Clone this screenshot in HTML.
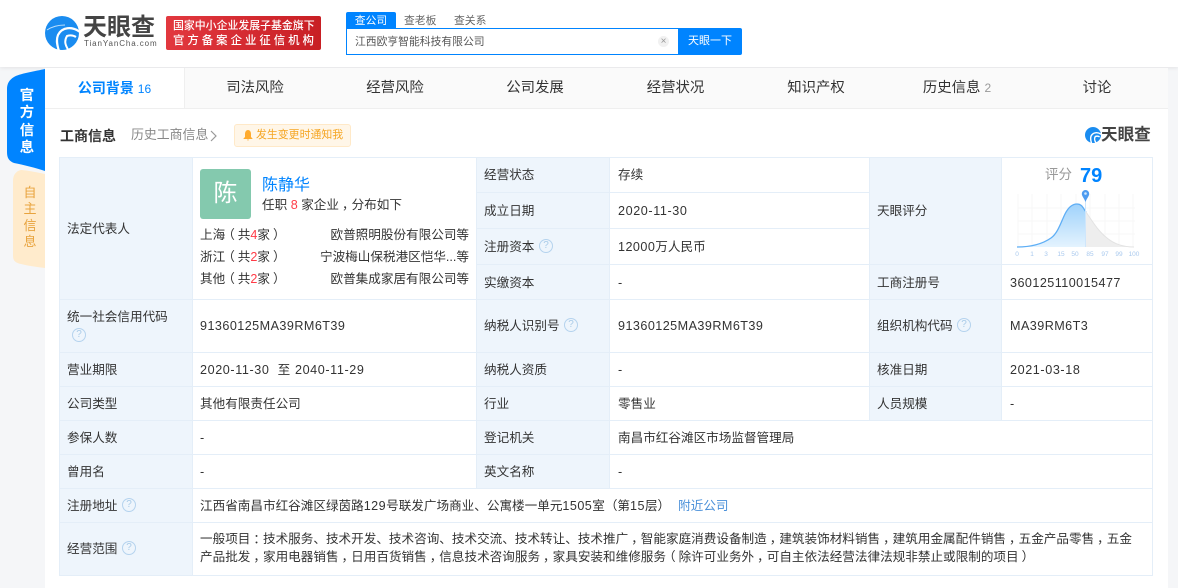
<!DOCTYPE html>
<html><head><meta charset="utf-8">
<style>
html,body{margin:0;padding:0;width:1178px;height:588px;overflow:hidden;background:#f5f6f8;}
body{position:relative;font-family:"Liberation Sans","Noto Sans CJK SC",sans-serif;font-size:12.6px;color:#333;}
.a{position:absolute;white-space:nowrap;line-height:22px;}
.l{position:absolute;background:#e4eef8;}
.b{position:absolute;background:#eef5fc;}
.q{position:absolute;width:12px;height:12px;border:1px solid #b5d3ee;border-radius:50%;color:#a9cbe8;font-size:10px;line-height:12px;text-align:center;}
.r{color:#ff3b47;}
.n{letter-spacing:.45px;}
.c{position:relative;left:3px;}
.o{position:relative;left:-3px;}
.t{position:absolute;top:70px;height:38px;line-height:37px;font-size:14.4px;color:#333;text-align:center;}
.t small{font-size:12px;color:#999;}
</style></head><body>
<div style="position:absolute;left:0;top:0;width:1178px;height:67px;background:#fff;box-shadow:0 1px 4px rgba(0,0,0,.08)"></div>
<!-- logo -->
<svg style="position:absolute;left:45px;top:16px" width="34" height="34" viewBox="0 0 34 34">
<circle cx="17" cy="17" r="17" fill="#1a8cf0"/>
<path d="M35 16C27 10 17 11 13 19C11 24 12 29 14 35" fill="none" stroke="#fff" stroke-width="2.2"/>
<path d="M2 14C8 10 14 9 20 9" fill="none" stroke="#bfe0fb" stroke-width="1"/>
<path d="M24 35C20 29 19 25 22 20C25 19 28 19 31 21" fill="none" stroke="#fff" stroke-width="2"/>
<path d="M34 21L30 34H24L34 26Z" fill="#fff"/>
</svg>
<div class="a" style="left:83px;top:14px;font-size:24px;line-height:27px;color:#444;font-weight:700;">天眼查</div>
<div class="a" style="left:84px;top:39px;font-size:8px;line-height:10px;color:#555;letter-spacing:.9px">TianYanCha.com</div>
<div style="position:absolute;left:166px;top:16px;width:155px;height:34px;border-radius:2px;background:linear-gradient(90deg,#e2383f,#c81f24)"></div>
<div class="a" style="left:173px;top:18px;font-size:10.9px;line-height:16px;color:#fff;font-weight:500">国家中小企业发展子基金旗下</div>
<div class="a" style="left:173px;top:33px;font-size:11.4px;line-height:16px;color:#fff;letter-spacing:3px;font-weight:500">官方备案企业征信机构</div>
<!-- search -->
<div style="position:absolute;left:346px;top:12px;width:50px;height:17px;background:#0084ff;border-radius:2px 2px 0 0;color:#fff;font-size:10.8px;line-height:18px;text-align:center">查公司</div>
<div class="a" style="left:404px;top:10px;font-size:10.8px;color:#666">查老板</div>
<div class="a" style="left:454px;top:10px;font-size:10.8px;color:#666">查关系</div>
<div style="position:absolute;left:346px;top:28px;width:332px;height:25px;border:1px solid #0084ff;background:#fff"></div>
<div class="a" style="left:355px;top:31px;font-size:10.8px;color:#555">江西欧亨智能科技有限公司</div>
<div style="position:absolute;left:658px;top:36px;width:11px;height:11px;border-radius:50%;background:#f1f1f1;color:#999;font-size:10px;line-height:11px;text-align:center">×</div>
<div style="position:absolute;left:678px;top:28px;width:64px;height:27px;background:#0084ff;border-radius:0 2px 2px 0;color:#fff;font-size:11px;line-height:27px;text-align:center">天眼一下</div>
<!-- main -->
<div style="position:absolute;left:45px;top:68px;width:1123px;height:520px;background:#fff"></div>
<div style="position:absolute;left:45px;top:68px;width:1123px;height:40px;background:#fafafa;border-bottom:1px solid #efefef"></div>
<div style="position:absolute;left:45px;top:68px;width:139px;height:40px;background:#fff;border-right:1px solid #efefef;border-bottom:1px solid #efefef"></div>
<div class="t" style="left:45px;width:139px;color:#0084ff;font-weight:700;font-size:14px">公司背景 <small style="color:#0084ff;font-weight:400">16</small></div>
<div class="t" style="left:185px;width:140px">司法风险</div>
<div class="t" style="left:325px;width:140px">经营风险</div>
<div class="t" style="left:465px;width:140px">公司发展</div>
<div class="t" style="left:605px;width:141px">经营状况</div>
<div class="t" style="left:746px;width:140px">知识产权</div>
<div class="t" style="left:886px;width:142px">历史信息 <small>2</small></div>
<div class="t" style="left:1026px;width:142px">讨论</div>
<!-- side tabs -->
<svg style="position:absolute;left:13px;top:168px" width="32" height="102" viewBox="0 0 32 102"><path d="M32 6C22 4 12 2 8 2C3 3 0 7 0 13V88C0 93 3 95 8 96C16 98 24 99 32 100Z" fill="#ffebcc"/></svg>
<svg style="position:absolute;left:6px;top:68px" width="39" height="104" viewBox="0 0 39 104"><path d="M39 1C30 3 12 6 8 9C3 12 1 16 1 21V84C1 90 3 93 8 95C18 97 30 100 39 103Z" fill="#0084ff"/></svg>
<div style="position:absolute;left:19px;top:88px;width:16px;font-size:14.4px;line-height:17.4px;color:#fff;font-weight:700;white-space:normal;text-align:center">官方信息</div>
<div style="position:absolute;left:22px;top:185px;width:16px;font-size:13px;line-height:16.3px;color:#e8a33d;white-space:normal;text-align:center">自主信息</div>
<!-- heading -->
<div class="a" style="left:60px;top:125px;font-size:14px;font-weight:700;color:#333">工商信息</div>
<div class="a" style="left:131px;top:124px;font-size:12.9px;color:#888">历史工商信息</div>
<svg style="position:absolute;left:209px;top:130px" width="9" height="12" viewBox="0 0 9 12"><path d="M2 1L7 6L2 11" fill="none" stroke="#999" stroke-width="1.2"/></svg>
<div style="position:absolute;left:234px;top:124px;width:115px;height:21px;background:#fff6e8;border:1px solid #ffe9c8;border-radius:3px"></div>
<svg style="position:absolute;left:243px;top:130px" width="10" height="11" viewBox="0 0 10 11"><path d="M5 0C3 0 2 2 2 4V7L0.5 8.5V9H9.5V8.5L8 7V4C8 2 7 0 5 0ZM3.8 9.6A1.3 1.3 0 0 0 6.2 9.6Z" fill="#ffab2e"/></svg>
<div class="a" style="left:256px;top:124px;font-size:10.9px;color:#f5a623">发生变更时通知我</div>
<svg style="position:absolute;left:1085px;top:127px" width="16" height="16" viewBox="0 0 34 34"><circle cx="17" cy="17" r="17" fill="#1a8cf0"/><path d="M35 16C27 10 17 11 13 19C11 24 12 29 14 35" fill="none" stroke="#fff" stroke-width="3"/><path d="M24 35C20 29 19 25 22 20C25 19 28 19 31 21" fill="none" stroke="#fff" stroke-width="3"/></svg>
<div class="a" style="left:1101px;top:124px;font-size:16.6px;font-weight:700;color:#444;">天眼查</div>
<!-- table backgrounds -->
<div class="b" style="left:60px;top:158px;width:132px;height:417px"></div>
<div class="b" style="left:477px;top:158px;width:132px;height:330px"></div>
<div class="b" style="left:870px;top:158px;width:131px;height:262px"></div>
<!-- lines -->
<div class="l" style="left:59px;top:157px;width:1094px;height:1px"></div>
<div class="l" style="left:477px;top:192px;width:392px;height:1px"></div>
<div class="l" style="left:477px;top:228px;width:392px;height:1px"></div>
<div class="l" style="left:477px;top:264px;width:392px;height:1px"></div>
<div class="l" style="left:59px;top:299px;width:1094px;height:1px"></div>
<div class="l" style="left:870px;top:264px;width:283px;height:1px"></div>
<div class="l" style="left:59px;top:352px;width:1094px;height:1px"></div>
<div class="l" style="left:59px;top:386px;width:1094px;height:1px"></div>
<div class="l" style="left:59px;top:420px;width:1094px;height:1px"></div>
<div class="l" style="left:59px;top:454px;width:1094px;height:1px"></div>
<div class="l" style="left:59px;top:488px;width:1094px;height:1px"></div>
<div class="l" style="left:59px;top:522px;width:1094px;height:1px"></div>
<div class="l" style="left:59px;top:575px;width:1094px;height:1px"></div>
<div class="l" style="left:59px;top:157px;width:1px;height:419px"></div>
<div class="l" style="left:192px;top:157px;width:1px;height:419px"></div>
<div class="l" style="left:476px;top:157px;width:1px;height:332px"></div>
<div class="l" style="left:609px;top:157px;width:1px;height:332px"></div>
<div class="l" style="left:869px;top:157px;width:1px;height:264px"></div>
<div class="l" style="left:1001px;top:157px;width:1px;height:264px"></div>
<div class="l" style="left:1152px;top:157px;width:1px;height:419px"></div>
<!-- col 1 labels -->
<div class="a" style="left:67px;top:218px">法定代表人</div>
<div class="a" style="left:67px;top:306px">统一社会信用代码</div>
<div class="q" style="left:72px;top:328px">?</div>
<div class="a" style="left:67px;top:359px">营业期限</div>
<div class="a" style="left:67px;top:393px">公司类型</div>
<div class="a" style="left:67px;top:427px">参保人数</div>
<div class="a" style="left:67px;top:461px">曾用名</div>
<div class="a" style="left:67px;top:495px">注册地址</div>
<div class="q" style="left:122px;top:498px">?</div>
<div class="a" style="left:67px;top:538px">经营范围</div>
<div class="q" style="left:122px;top:541px">?</div>
<!-- legal rep -->
<div style="position:absolute;left:200px;top:169px;width:51px;height:50px;background:#84c9ae;border-radius:3px;color:#fff;font-size:24px;line-height:50px;text-align:center">陈</div>
<div class="a" style="left:262px;top:175px;font-size:16px;color:#0084ff">陈静华</div>
<div class="a" style="left:262px;top:194px">任职 <span class="r">8</span> 家企业<span class="c">，</span>分布如下</div>
<div class="a" style="left:200px;top:224px">上海<span class="o">（</span>共<span class="r">4</span>家<span class="c">）</span></div>
<div class="a" style="right:709px;top:224px">欧普照明股份有限公司等</div>
<div class="a" style="left:200px;top:246px">浙江<span class="o">（</span>共<span class="r">2</span>家<span class="c">）</span></div>
<div class="a" style="right:709px;top:246px">宁波梅山保税港区恺华...等</div>
<div class="a" style="left:200px;top:268px">其他<span class="o">（</span>共<span class="r">2</span>家<span class="c">）</span></div>
<div class="a" style="right:709px;top:268px">欧普集成家居有限公司等</div>
<!-- values c1 -->
<div class="a n" style="left:200px;top:315px">91360125MA39RM6T39</div>
<div class="a n" style="left:200px;top:359px;letter-spacing:.6px">2020-11-30&nbsp; 至 2040-11-29</div>
<div class="a" style="left:200px;top:393px">其他有限责任公司</div>
<div class="a" style="left:200px;top:427px">-</div>
<div class="a" style="left:200px;top:461px">-</div>
<div class="a" style="left:200px;top:495px">江西省南昌市红谷滩区绿茵路<span class="n">129</span>号联发广场商业、公寓楼一单元<span class="n">1505</span>室（第<span class="n">15</span>层）<span style="color:#4a90d9;margin-left:8px">附近公司</span></div>
<div class="a" style="left:200px;top:530px;line-height:18px;">一般项目<span class="c">：</span>技术服务、技术开发、技术咨询、技术交流、技术转让、技术推广<span class="c">，</span>智能家庭消费设备制造<span class="c">，</span>建筑装饰材料销售<span class="c">，</span>建筑用金属配件销售<span class="c">，</span>五金产品零售<span class="c">，</span>五金<br>产品批发<span class="c">，</span>家用电器销售<span class="c">，</span>日用百货销售<span class="c">，</span>信息技术咨询服务<span class="c">，</span>家具安装和维修服务<span class="o">（</span>除许可业务外<span class="c">，</span>可自主依法经营法律法规非禁止或限制的项目<span class="c">）</span></div>
<!-- col 2 -->
<div class="a" style="left:484px;top:164px">经营状态</div>
<div class="a" style="left:484px;top:200px">成立日期</div>
<div class="a" style="left:484px;top:236px">注册资本</div>
<div class="q" style="left:539px;top:239px">?</div>
<div class="a" style="left:484px;top:272px">实缴资本</div>
<div class="a" style="left:484px;top:315px">纳税人识别号</div>
<div class="q" style="left:564px;top:318px">?</div>
<div class="a" style="left:484px;top:359px">纳税人资质</div>
<div class="a" style="left:484px;top:393px">行业</div>
<div class="a" style="left:484px;top:427px">登记机关</div>
<div class="a" style="left:484px;top:461px">英文名称</div>
<div class="a" style="left:618px;top:164px">存续</div>
<div class="a" style="left:618px;top:200px;letter-spacing:.6px">2020-11-30</div>
<div class="a" style="left:618px;top:236px"><span class="n">12000</span>万人民币</div>
<div class="a" style="left:618px;top:272px">-</div>
<div class="a n" style="left:618px;top:315px">91360125MA39RM6T39</div>
<div class="a" style="left:618px;top:359px">-</div>
<div class="a" style="left:618px;top:393px">零售业</div>
<div class="a" style="left:618px;top:427px">南昌市红谷滩区市场监督管理局</div>
<div class="a" style="left:618px;top:461px">-</div>
<!-- col 3 -->
<div class="a" style="left:877px;top:200px">天眼评分</div>
<div class="a" style="left:877px;top:272px">工商注册号</div>
<div class="a" style="left:877px;top:315px">组织机构代码</div>
<div class="q" style="left:957px;top:318px">?</div>
<div class="a" style="left:877px;top:359px">核准日期</div>
<div class="a" style="left:877px;top:393px">人员规模</div>
<div class="a n" style="left:1010px;top:272px">360125110015477</div>
<div class="a n" style="left:1010px;top:315px">MA39RM6T3</div>
<div class="a" style="left:1010px;top:359px;letter-spacing:.6px">2021-03-18</div>
<div class="a" style="left:1010px;top:393px">-</div>
<!-- score -->
<div class="a" style="left:1045px;top:164px;color:#999;font-size:13.5px">评分</div>
<div class="a" style="left:1080px;top:165px;font-size:20px;line-height:22px;font-weight:700;color:#0084ff">79</div>
<svg style="position:absolute;left:1015px;top:188px" width="126" height="72" viewBox="0 0 126 72">
<defs><linearGradient id="g" x1="0" y1="0" x2="0" y2="1"><stop offset="0" stop-color="#9fd2fb"/><stop offset="1" stop-color="#e4f3fe"/></linearGradient></defs>
<g stroke="#f7f7f7" stroke-width="1"><path d="M3 6V59M17 6V59M32 6V59M46 6V59M61 6V59M75 6V59M90 6V59M104 6V59M118 6V59M3 20H120M3 33H120M3 46H120"/></g>
<path d="M71 24C76 31 82 42 92 50C98 55 106 59 119 59H71Z" fill="#eeeeee"/>
<path d="M2 59C14 59 26 57 36 50C43 45 46 34 50 26C53 20 57 16 62 16C67 16 68 20 71 24V59Z" fill="url(#g)"/>
<path d="M2 59C14 59 26 57 36 50C43 45 46 34 50 26C53 20 57 16 62 16C67 16 68 20 71 24" fill="none" stroke="#5eaef5" stroke-width="1.3"/>
<path d="M71 24C76 31 82 42 92 50C98 55 106 59 119 59" fill="none" stroke="#e3e3e3" stroke-width="1"/>
<path d="M70.500 8V59" stroke="#cfe6fb" stroke-width="1"/>
<path d="M70.500 2A3.700 3.700 0 0 1 74.200 6C74.200 8 71.500 11 70.500 14C69.500 11 66.800 8 66.800 6A3.700 3.700 0 0 1 70.500 2Z" fill="#4e9bf0"/>
<circle cx="70.500" cy="5.500" r="1.300" fill="#cfe6fb"/>
<g font-size="6.500" fill="#a9c9ee" font-family="Liberation Sans,sans-serif" text-anchor="middle"><text x="2" y="68">0</text><text x="17" y="68">1</text><text x="31" y="68">3</text><text x="46" y="68">15</text><text x="60" y="68">50</text><text x="75" y="68">85</text><text x="90" y="68">97</text><text x="104" y="68">99</text><text x="119" y="68">100</text></g>
</svg>
</body></html>
